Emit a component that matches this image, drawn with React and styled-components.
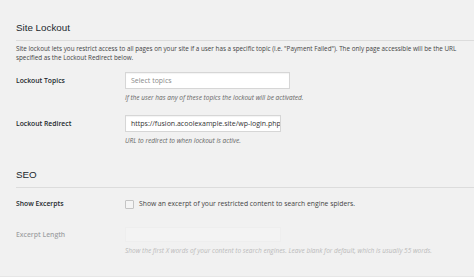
import React from 'react';
import styled, { createGlobalStyle } from 'styled-components';

const Global = createGlobalStyle`
  html, body { margin: 0; padding: 0; background: #f1f1f1; }
  body { font-family: "Open Sans", "Noto Sans", sans-serif; color: #444; }
`;

const Page = styled.div`
  width: 474px;
  height: 277px;
  box-sizing: border-box;
  padding: 21px 0 0 16px;
  background: #f1f1f1;
  border-bottom: 1px solid #e6e6e6;
  overflow: hidden;
`;

const Heading = styled.h2`
  margin: 0;
  padding: 0 0 5px;
  font-family: "Liberation Sans", Arial, sans-serif;
  font-size: 9.8px;
  font-weight: 400;
  line-height: 14px;
  color: #23282d;
  border-bottom: 1px solid #dcdcdc;
  margin-top: ${p => p.gap || 0}px;
`;

const Intro = styled.p`
  margin: 3px 0 0;
  width: 456px;
  font-size: 6.3px;
  line-height: 9px;
  color: #444;
`;

const Row = styled.div`
  display: grid;
  grid-template-columns: 109px 1fr;
  align-items: start;
  margin-top: ${p => p.top}px;
  opacity: ${p => (p.disabled ? 0.4 : 1)};
`;

const Label = styled.div`
  font-size: 6.8px;
  font-weight: 600;
  color: #23282d;
  line-height: ${p => p.lh || 17}px;
`;

const Input = styled.div`
  width: ${p => p.w}px;
  height: ${p => p.h || 17}px;
  box-sizing: border-box;
  border: 1px solid ${p => p.faint ? '#ececec' : '#d6d6d6'};
  background: ${p => p.faint ? '#f6f6f6' : '#fff'};
  box-shadow: ${p => p.faint ? 'none' : 'inset 0 1px 1px rgba(0,0,0,0.05)'};
  padding: 0 5px;
  font-size: 7px;
  line-height: ${p => (p.h || 17) - 2}px;
  color: ${p => p.muted ? '#8a8a8a' : '#333'};
  white-space: nowrap;
  overflow: hidden;
`;

const Desc = styled.div`
  margin-top: 4px;
  font-size: 6.5px;
  font-style: italic;
  color: #666;
  line-height: 9px;
  white-space: nowrap;
`;

const CheckLine = styled.label`
  display: flex;
  align-items: center;
  gap: 5px;
  font-size: 6.8px;
  color: #444;
  line-height: 10px;
`;

const Box = styled.span`
  width: 7px;
  height: 7px;
  border: 1px solid #c4c4c4;
  background: #f4f4f4;
  border-radius: 1px;
  flex: none;
`;

export default function App() {
  return (
    <>
      <Global />
      <Page>
        <Heading>Site Lockout</Heading>
        <Intro>
          Site lockout lets you restrict access to all pages on your site if a user has a specific topic (i.e. "Payment Failed"). The only page accessible will be the URL specified as the Lockout Redirect below.
        </Intro>

        <Row top={10}>
          <Label>Lockout Topics</Label>
          <div>
            <Input w={165} muted>Select topics</Input>
            <Desc>If the user has any of these topics the lockout will be activated.</Desc>
          </div>
        </Row>

        <Row top={13}>
          <Label>Lockout Redirect</Label>
          <div>
            <Input w={156}>https://fusion.acoolexample.site/wp-login.php</Input>
            <Desc>URL to redirect to when lockout is active.</Desc>
          </div>
        </Row>

        <Heading gap={23}>SEO</Heading>

        <Row top={11}>
          <Label lh={10}>Show Excerpts</Label>
          <CheckLine>
            <Box />
            Show an excerpt of your restricted content to search engine spiders.
          </CheckLine>
        </Row>

        <Row top={18} disabled>
          <Label lh={15}>Excerpt Length</Label>
          <div>
            <Input w={156} h={15} faint />
            <Desc>Show the first X words of your content to search engines. Leave blank for default, which is usually 55 words.</Desc>
          </div>
        </Row>
      </Page>
    </>
  );
}
